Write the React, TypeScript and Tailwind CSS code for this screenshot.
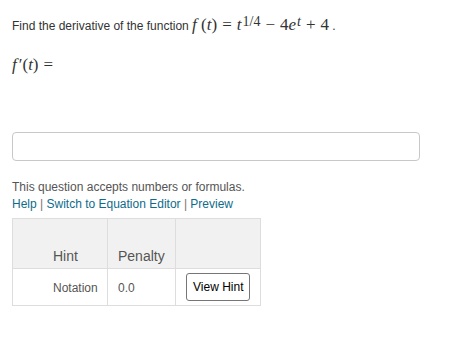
import React from 'react';

const serif = "font-['Liberation_Serif','DejaVu_Serif',serif]";

function MathExpr() {
  return (
    <span className={`${serif} text-[17px] text-[#333]`}>
      <i>f</i> (<i>t</i>)<span className="mx-[5px]">=</span><i>t</i>
      <sup className="text-[14px] relative -top-[4px] ml-[1px]">1/4</sup>
      <span className="mx-[5px]">−</span>4<i>e</i>
      <sup className="text-[14px] relative -top-[4px] ml-[1px]"><i>t</i></sup>
      <span className="mx-[5px]">+</span>4
    </span>
  );
}

export default function App() {
  return (
    <div className="w-[460px] h-[350px] bg-white font-['Liberation_Sans',Arial,sans-serif] text-[12px] text-[#333] px-3 pt-[15px]">
      <p className="leading-[20px]">
        Find the derivative of the function <MathExpr /> .
      </p>

      <p className={`${serif} text-[17px] mt-[19px] leading-[20px]`}>
        <i>f</i><span className="ml-[2px]">′</span>(<i>t</i>)<span className="ml-[5px]">=</span>
      </p>

      <div className="mt-[57px] w-[408px] h-[29px] border border-[#c8c8c8] rounded-[4px]" />

      <p className="mt-[18px] text-[#555] leading-[17px]">This question accepts numbers or formulas.</p>
      <p className="leading-[17px] text-[#0e6c8b]">
        <a href="#" className="text-[#0e6c8b]">Help</a>
        <span className="text-[#777]"> | </span>
        <a href="#" className="text-[#0e6c8b]">Switch to Equation Editor</a>
        <span className="text-[#777]"> | </span>
        <a href="#" className="text-[#0e6c8b]">Preview</a>
      </p>

      <table className="mt-[5px] w-[249px] border-collapse text-[#555] text-[12px]">
        <thead>
          <tr className="bg-[#f1f1f1] h-[50px]">
            <th className="border border-[#ddd] align-bottom text-left font-normal pl-[40px] pb-[1px] w-[95px] text-[14px]">Hint</th>
            <th className="border border-[#ddd] align-bottom text-left font-normal pl-[10px] pb-[1px] w-[68px] text-[14px]">Penalty</th>
            <th className="border border-[#ddd]" />
          </tr>
        </thead>
        <tbody>
          <tr className="h-[37px]">
            <td className="border border-[#ddd] pl-[40px] pt-[2px]">Notation</td>
            <td className="border border-[#ddd] pl-[10px] pt-[2px]">0.0</td>
            <td className="border border-[#ddd] pl-[10px]">
              <button className="h-[28px] px-[6px] border border-[#767676] rounded-[3px] bg-white text-black text-[12px]">View Hint</button>
            </td>
          </tr>
        </tbody>
      </table>
    </div>
  );
}
